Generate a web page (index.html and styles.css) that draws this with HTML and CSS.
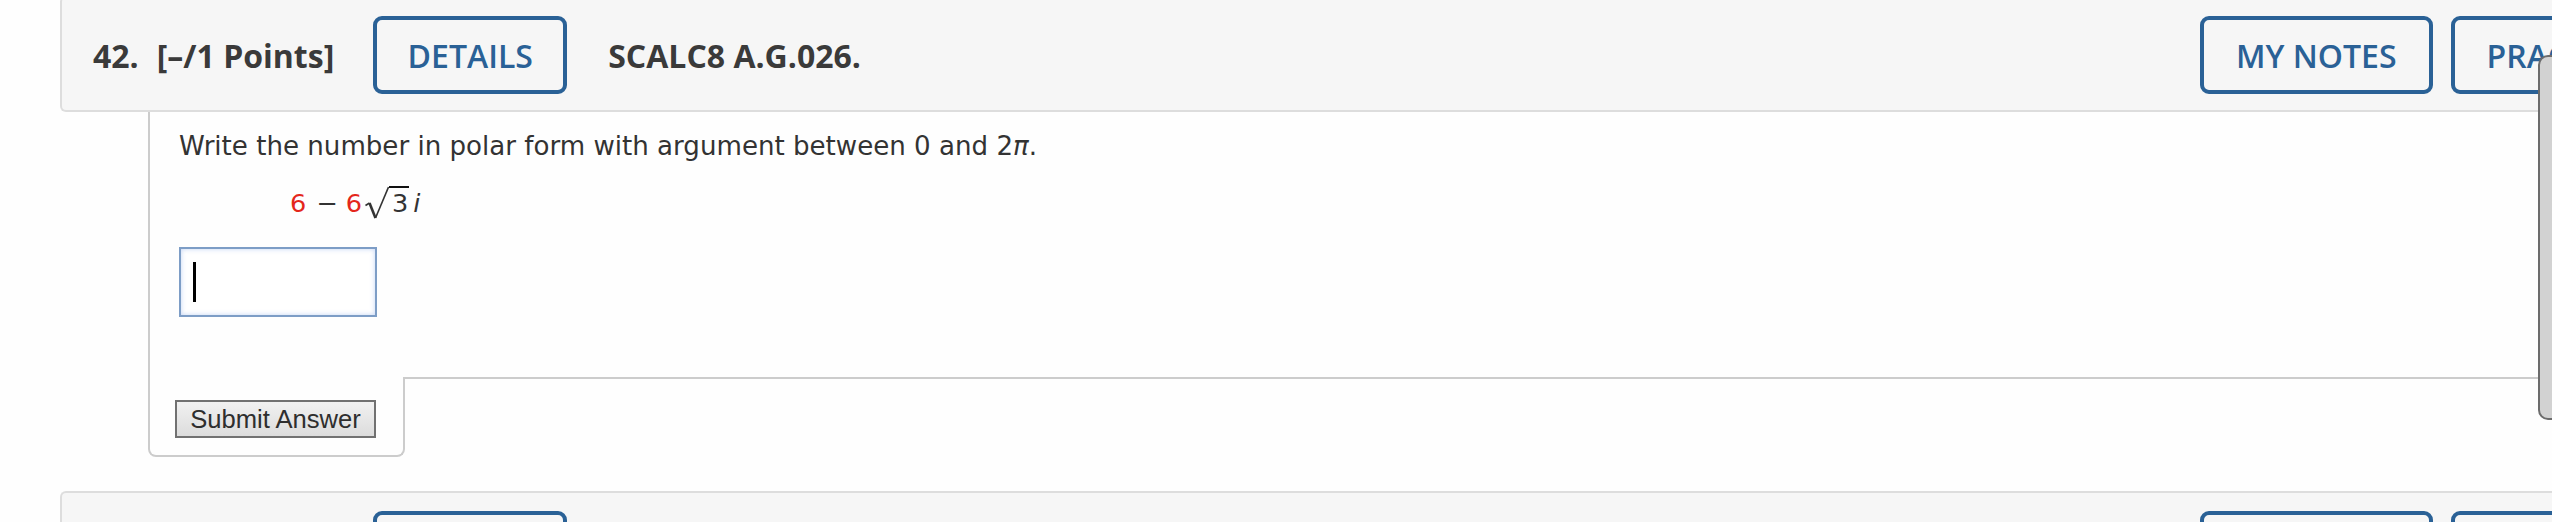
FILE: index.html
```html
<!DOCTYPE html>
<html lang="en">
<head>
<meta charset="utf-8">
<title>Question 42</title>
<link rel="stylesheet" href="styles.css">
</head>
<body>
<div class="page">
  <section class="question">
    <header class="qhead">
      <div class="hleft">
        <span class="qnum">42.</span>
        <span class="pts">[–/1 Points]</span>
        <button class="hbtn details">DETAILS</button>
        <span class="code">SCALC8 A.G.026.</span>
      </div>
      <button class="hbtn">MY NOTES</button>
      <button class="hbtn practice">PRACTICE ANOTHER</button>
    </header>
    <div class="qbody">
      <div class="qcontent">
        <p class="prompt">Write the number in polar form with argument between 0 and 2<i class="pi">π</i>.</p>
        <p class="math"><span class="red">6</span><span class="op">−</span><span class="red">6</span><span class="sqrt"><svg class="rad" width="25" height="34" viewBox="0 0 25 34" aria-hidden="true"><path d="M1.5 19.5 L5.5 17" stroke="#333" stroke-width="1.6" fill="none"/><path d="M5.5 17 L11.5 32" stroke="#333" stroke-width="2.6" fill="none"/><path d="M11.5 32 L24.5 1" stroke="#333" stroke-width="1.6" fill="none"/></svg><span class="under">3</span></span><i class="imag">i</i></p>
        <div class="answer"><span class="caret"></span></div>
      </div>
      <div class="qfoot">
        <div class="submitcell"><button class="submit">Submit Answer</button></div>
        <div class="footrest"></div>
      </div>
    </div>
  </section>
  <section class="question next">
    <header class="qhead">
      <div class="hleft">
        <span class="qnum">43.</span>
        <span class="pts">[–/1 Points]</span>
        <button class="hbtn details">DETAILS</button>
        <span class="code">SCALC8 A.G.027.</span>
      </div>
      <button class="hbtn">MY NOTES</button>
      <button class="hbtn practice">PRACTICE ANOTHER</button>
    </header>
  </section>
</div>
<div class="sidetab"></div>
</body>
</html>
```

FILE: styles.css
```css
html, body {
  margin: 0;
  padding: 0;
  overflow: hidden;
  background: #fefefe;
}
body {
  width: 2552px;
  height: 522px;
  position: relative;
  font-family: "DejaVu Sans", Verdana, sans-serif;
  color: #333;
}
.page {
  width: 3200px;
  padding-left: 60px;
  margin-top: -4px;
}
.qhead {
  display: flex;
  align-items: center;
  box-sizing: border-box;
  height: 116px;
  padding: 18px 0 16px 31px;
  background: #f6f6f6;
  border: 2px solid #dddddd;
  border-right: none;
  border-radius: 6px 0 0 6px;
  font-family: "Open Sans", sans-serif;
}
.hleft {
  flex: 0 0 2107px;
  display: flex;
  align-items: center;
}
.qnum, .pts, .code {
  font-size: 32px;
  font-weight: 700;
  color: #3a3a3a;
}
.pts { margin-left: 18px; }
.code { margin-left: 41px; }
.hbtn {
  box-sizing: border-box;
  height: 78px;
  padding: 0 32px;
  background: transparent;
  border: 4px solid #2a6196;
  border-radius: 9px;
  color: #2a6196;
  font-family: "Open Sans", sans-serif;
  font-size: 32px;
  font-weight: 600;
  white-space: nowrap;
}
.details { margin-left: 39px; width: 194px; padding: 0; }
.practice { margin-left: 18px; }

.qbody {
  margin-left: 88px;
}
.qcontent {
  border-left: 2px solid #cccccc;
  padding: 19px 0 60px 29px;
}
.prompt {
  margin: 0;
  font-size: 26.1px;
  line-height: 30px;
}
.pi { font-style: italic; }
.math {
  margin: 25px 0 0 111px;
  height: 30px;
  font-size: 25.6px;
  line-height: 30px;
  white-space: nowrap;
}
.red { color: #e4261b; }
.op { color: #333; margin: 0 8px 0 10px; }
.sqrt { white-space: nowrap; }
.rad {
  vertical-align: -8px;
  margin-left: 2px;
}
.under {
  display: inline-block;
  line-height: 1;
  padding: 3px 1px 0 3px;
  border-top: 2px solid #111;
}
.imag { font-style: italic; padding-left: 4px; }
.answer {
  box-sizing: border-box;
  width: 198px;
  height: 70px;
  margin-top: 31px;
  border: 2px solid #7d9dc6;
  background: #fff;
  box-shadow: inset 0 0 5px rgba(120, 160, 230, 0.45);
  display: flex;
  align-items: center;
  padding-left: 12px;
}
.caret {
  width: 3px;
  height: 40px;
  background: #000;
}
.qfoot {
  display: flex;
}
.submitcell {
  box-sizing: border-box;
  width: 257px;
  height: 80px;
  border: 2px solid #cccccc;
  border-top: none;
  border-radius: 0 0 8px 8px;
  padding: 23px 0 0 25px;
}
.submit {
  box-sizing: border-box;
  width: 201px;
  height: 38px;
  padding: 0;
  border: 2px solid #717171;
  border-radius: 0;
  background: linear-gradient(#f1f1f1, #dcdcdc);
  color: #2e2e2e;
  font-family: "Liberation Sans", Arial, sans-serif;
  font-size: 25.6px;
  line-height: 32px;
}
.footrest {
  flex: 1;
  border-top: 2px solid #cccccc;
}
.next {
  margin-top: 34px;
}
.next .qhead { border-radius: 6px 0 0 0; }
.sidetab {
  position: absolute;
  left: 2538px;
  top: 55px;
  width: 40px;
  height: 365px;
  box-sizing: border-box;
  background: #d2d2d2;
  border: 2px solid #6c6c6c;
  border-radius: 10px 0 0 10px;
}
```
